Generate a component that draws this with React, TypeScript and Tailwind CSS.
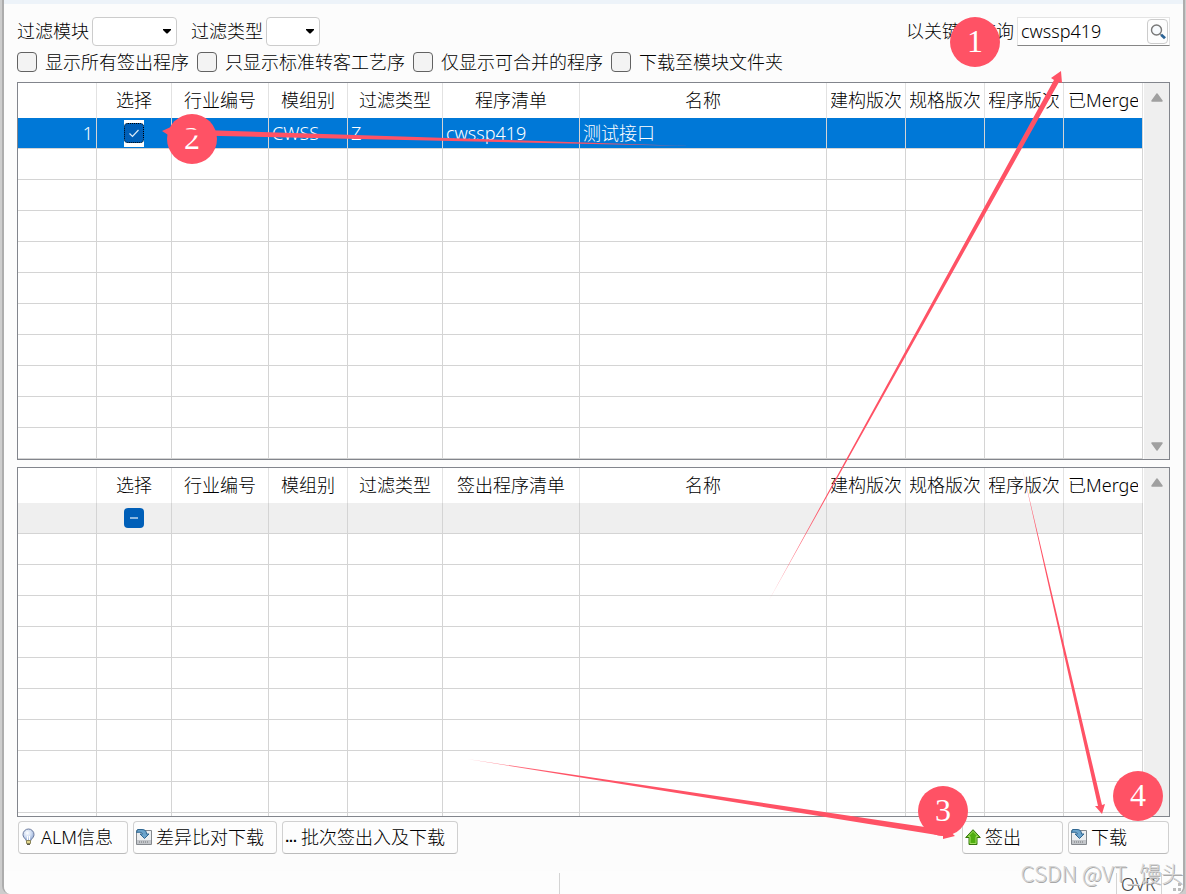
import { ReactNode } from "react";

const columns = [
  { key: "no", title: "", col: "w-[79px]" },
  { key: "select", title: "选择", col: "w-[75px]" },
  { key: "industry", title: "行业编号", col: "w-[97px]" },
  { key: "module", title: "模组别", col: "w-[79px]" },
  { key: "type", title: "过滤类型", col: "w-[95px]" },
  { key: "program", title: "程序清单", col: "w-[137px]" },
  { key: "name", title: "名称", col: "w-auto" },
  { key: "build", title: "建构版次", col: "w-[79px]" },
  { key: "spec", title: "规格版次", col: "w-[79px]" },
  { key: "version", title: "程序版次", col: "w-[79px]" },
  { key: "merged", title: "已Merge", col: "w-[79px]" },
];

const filters = [
  "显示所有签出程序",
  "只显示标准转客工艺序",
  "仅显示可合并的程序",
  "下载至模块文件夹",
];

const program: any = {
  no: "1",
  module: "CWSS",
  type: "Z",
  program: "cwssp419",
  name: "测试接口",
};

const BulbIcon = () => (
  <svg width="16" height="18" viewBox="0 0 16 18" className="shrink-0">
    <defs>
      <radialGradient id="bulb" cx="0.4" cy="0.35" r="0.7">
        <stop offset="0" stopColor="#ffffff" />
        <stop offset="0.5" stopColor="#cfdcf2" />
        <stop offset="1" stopColor="#8ea6d2" />
      </radialGradient>
    </defs>
    <path
      d="M7.500 1A5.500 5.500 0 0 0 2 6.500c0 2.300 1.400 3.400 2.400 4.600.5.6.6 1 .6 1.400h5c0-.4.1-.8.6-1.400 1-1.200 2.400-2.300 2.400-4.600A5.500 5.500 0 0 0 7.500 1z"
      fill="url(#bulb)"
      stroke="#6b7a9e"
    />
    <path d="M6.500 8v4M8.500 8v4" stroke="#ffffff" />
    <path d="M5.500 12.500h4v3h-4z" fill="#e2d68c" stroke="#8a8458" />
    <path d="M6 16.500h3" stroke="#5c5a4c" />
  </svg>
);

const DownloadIcon = () => (
  <svg width="16" height="16" viewBox="0 0 16 16" className="shrink-0">
    <path d="M0.500 1.500h15v14h-15z" fill="#eceef0" stroke="#84888d" />
    <path d="M1 11h14v4H1z" fill="#c3c6ca" />
    <path d="M3.500 12v2M5.500 12v2M7.500 12v2M9.500 12v2M11.500 12v2" stroke="#9a9da1" />
    <path
      d="M1.500 0.500h4.500c3 0 4.500 1.500 4.500 4.500H13L8.500 9.500 4 5h2.500C6.300 3.600 4.500 2.800 0.500 3.500z"
      fill="#6ba3cb"
      stroke="#2f6691"
    />
  </svg>
);

const UpIcon = () => (
  <svg width="16" height="16" viewBox="0 0 16 16" className="shrink-0">
    <path
      d="M8 0.700 15.300 8.500h-3.300v7H4v-7H0.700z"
      fill="#4fae10"
      stroke="#34740c"
      strokeLinejoin="round"
    />
    <path d="M8 2.300 13 7.500h-2v7H5v-7H3z" fill="none" stroke="#a3df62" />
  </svg>
);

const SearchIcon = () => (
  <svg width="16" height="16" viewBox="0 0 16 16">
    <circle cx="6.500" cy="6" r="5" fill="#f7fafd" stroke="#777777" strokeWidth="1.400" />
    <path d="m10 9.500 1.500 1.500" stroke="#8b8b8b" strokeWidth="1.500" />
    <path d="m11.200 10.700 3.800 3.600" stroke="#2c6496" strokeWidth="2.800" />
  </svg>
);

const ScrollArrow = ({ down }: { down?: boolean }) => (
  <svg width="12" height="9" viewBox="0 0 12 9" className={down ? "rotate-180" : ""}>
    <path d="M6 1 11 8H1z" fill="#a0a0a0" stroke="#a0a0a0" strokeWidth="1.500" strokeLinejoin="round" />
  </svg>
);

const Combo = ({ id, className }: { id: string; className: string }) => (
  <div className={`relative ${className}`}>
    <select
      id={id}
      className="block h-[29px] w-full appearance-none rounded-[4px] border border-[#cccccc] bg-white"
    >
      <option value=""></option>
    </select>
    <svg
      width="8"
      height="5"
      viewBox="0 0 8 5"
      className="pointer-events-none absolute right-[6px] top-3"
    >
      <path d="M0 0h8v1L4.500 4.500h-1L0 1z" fill="#000" />
    </svg>
  </div>
);

const ToolButton = ({ icon, className, children }: { icon: ReactNode; className: string; children: ReactNode }) => (
  <button
    type="button"
    className={`flex h-[33px] items-center gap-1 whitespace-nowrap rounded-[4px] border border-[#d0d0d0] border-b-[#bbbbbb] bg-[#fdfdfd] px-[2px] pb-[2px] ${className}`}
  >
    {icon}
    <span>{children}</span>
  </button>
);

const RowCheck = ({ mixed }: { mixed?: boolean }) => (
  <div
    className={
      mixed
        ? "relative mx-auto h-5 w-5"
        : "relative mx-auto flex h-[27px] w-5 items-center bg-white"
    }
  >
    <input
      type="checkbox"
      aria-label="选择"
      defaultChecked={!mixed}
      className={
        mixed
          ? "block h-5 w-5 appearance-none rounded-[4px] bg-[#005fb8]"
          : "block h-5 w-5 appearance-none rounded-[4px] border border-dotted border-black bg-[#005fb8]"
      }
    />
    <svg
      viewBox="0 0 20 20"
      className={
        mixed
          ? "pointer-events-none absolute left-0 top-0 h-5 w-5"
          : "pointer-events-none absolute left-0 top-[3px] h-5 w-5"
      }
    >
      {mixed ? (
        <path d="M6 10h8" stroke="#8cb8e0" strokeWidth="2" />
      ) : (
        <path d="m5.500 10.500 3 3 6-6.500" fill="none" stroke="#dcebf8" strokeWidth="1.200" />
      )}
    </svg>
  </div>
);

const Grid = ({ rows, programTitle, selected, className, children }: any) => (
  <div className={`flex overflow-hidden border border-[#82858c] bg-white ${className}`}>
    <table className="h-max w-full min-w-0 flex-1 table-fixed border-separate border-spacing-0">
      <colgroup>
        {columns.map((item) => (
          <col key={item.key} className={item.col} />
        ))}
      </colgroup>
      <thead>
        <tr className="h-[35px]">
          {columns.map((item) => (
            <th key={item.key} scope="col" className="border-r border-[#e2e2e2] px-1 pb-[2px] pt-0 font-light">
              <div
                className={
                  item.key === "merged"
                    ? "flex overflow-hidden whitespace-nowrap"
                    : "flex justify-center overflow-hidden whitespace-nowrap"
                }
              >
                {item.key === "program" ? programTitle : item.title}
              </div>
            </th>
          ))}
        </tr>
      </thead>
      <tbody>
        {Array.from({ length: rows }).map((_, index) => (
          <tr
            key={index}
            className={
              index > 0 ? "h-[31px]" : selected ? "h-[31px] bg-[#0078d7] text-white" : "h-[31px] bg-[#efefef]"
            }
          >
            {columns.map((item) => (
              <td
                key={item.key}
                className={
                  item.key === "no"
                    ? "whitespace-nowrap border-b border-r border-[#d4d4d4] px-[3px] py-0 text-right"
                    : "whitespace-nowrap border-b border-r border-[#d4d4d4] px-[3px] py-0"
                }
              >
                {index === 0 && item.key === "select" && <RowCheck mixed={!selected} />}
                {index === 0 && selected && selected[item.key]}
              </td>
            ))}
          </tr>
        ))}
      </tbody>
    </table>
    <div className="ml-px flex w-[25px] shrink-0 flex-col items-center justify-between bg-[#efefef] pb-2 pt-[10px]">
      <ScrollArrow />
      {children}
    </div>
  </div>
);

const marks = [
  { n: 1, x: 975, y: 42 },
  { n: 2, x: 192, y: 139 },
  { n: 3, x: 943, y: 811 },
  { n: 4, x: 1138, y: 796 },
];

// each arrow fades in from its thin tail
const arrows = [
  { id: "a1", from: [768, 602], to: [1061, 71], d: "M768 602 1054 80 1051 78 1061 71 1062 83 1059 82z" },
  { id: "a2", from: [690, 146], to: [162, 131], d: "M690 146 173 135 173 138 162 131 173 126 173 129z" },
  { id: "a3", from: [467, 759], to: [954, 836], d: "M467 759 945 830 945 827 955 836 943 839 943 836z" },
  { id: "a4", from: [1022, 467], to: [1102, 814], d: "M1022 467 1102 805 1105 804 1102 814 1095 806 1098 806z" },
];

const Annotations = () => (
  <svg
    width="1186"
    height="894"
    viewBox="0 0 1186 894"
    className="pointer-events-none absolute left-0 top-0"
  >
    <defs>
      {arrows.map((item) => (
        <linearGradient
          key={item.id}
          id={item.id}
          gradientUnits="userSpaceOnUse"
          x1={item.from[0]}
          y1={item.from[1]}
          x2={item.to[0]}
          y2={item.to[1]}
        >
          <stop offset="0" stopColor="#ff5265" stopOpacity="0.700" />
          <stop offset="0.200" stopColor="#ff5265" />
        </linearGradient>
      ))}
    </defs>
    {marks.map((item) => (
      <g key={item.n}>
        <circle cx={item.x} cy={item.y} r="25" fill="#ff5265" />
        <text
          x={item.x}
          y={item.y + 10}
          textAnchor="middle"
          fill="#fff"
          className="font-['Liberation_Serif',serif] text-[32px] font-normal"
        >
          {item.n}
        </text>
      </g>
    ))}
    {arrows.map((item) => (
      <path key={item.id} d={item.d} fill={`url(#${item.id})`} />
    ))}
  </svg>
);

const App = () => {
  return (
    <div className="relative min-h-screen overflow-hidden bg-[#cdcdcd] pl-[2px] pr-px font-['Noto_Sans','Noto_Sans_CJK_SC',sans-serif] text-[18px] font-light leading-6 text-black">
      <main className="flex min-h-screen flex-col rounded-b-lg border-x-2 border-[#adadad] bg-[#fcfcfc]">
        <div className="h-1 bg-[#edf3f9]" />
        <div className="px-[13px] pt-[13px]">
          <div className="flex items-center gap-[3px] whitespace-nowrap">
            <label htmlFor="module" className="pb-[2px]">
              过滤模块
            </label>
            <Combo id="module" className="mr-[11px] w-[85px]" />
            <label htmlFor="type" className="pb-[2px]">
              过滤类型
            </label>
            <Combo id="type" className="w-[54px]" />
            <label htmlFor="keyword" className="ml-auto pb-[2px]">
              以关键字查询
            </label>
            <div className="flex h-[29px] w-[153px] items-center border border-[#e4e4e4] border-b-[#868686] bg-white pr-px">
              <input
                id="keyword"
                type="text"
                defaultValue="cwssp419"
                className="h-6 min-w-0 flex-1 bg-transparent pb-[2px] pl-[3px] outline-none"
              />
              <button
                type="button"
                aria-label="查询"
                className="flex h-[25px] w-[21px] items-center justify-center rounded-[4px] border border-[#cccccc] bg-[#fdfdfd]"
              >
                <SearchIcon />
              </button>
            </div>
          </div>

          <div className="mt-1 flex gap-2 whitespace-nowrap">
            {filters.map((item) => (
              <label key={item} className="flex items-center gap-2">
                <input
                  type="checkbox"
                  className="h-5 w-5 appearance-none rounded-[4px] border border-[#626262] bg-[#f3f3f3]"
                />
                {item}
              </label>
            ))}
          </div>

          <Grid rows={11} programTitle="程序清单" selected={program} className="mt-2">
            <ScrollArrow down />
          </Grid>
          <Grid rows={11} programTitle="签出程序清单" className="mt-[7px] h-[350px]" />

          <div className="mt-1 flex gap-[5px] px-px">
            <ToolButton icon={<BulbIcon />} className="w-[110px]">
              ALM信息
            </ToolButton>
            <ToolButton icon={<DownloadIcon />} className="w-[144px]">
              差异比对下载
            </ToolButton>
            <ToolButton
              icon={<span className="w-3 font-['Liberation_Sans',sans-serif] text-[14px] font-bold">...</span>}
              className="w-[176px]"
            >
              批次签出入及下载
            </ToolButton>
            <ToolButton icon={<UpIcon />} className="ml-auto w-[101px]">
              签出
            </ToolButton>
            <ToolButton icon={<DownloadIcon />} className="w-[101px]">
              下载
            </ToolButton>
          </div>
        </div>

        <footer className="mt-[17px] flex h-[23px] justify-between overflow-hidden rounded-b-lg bg-[#fdfdfd] pt-[2px]">
          <div className="w-[47.2%] border-r border-[#d4d4d4]" />
          <div className="flex">
            <div className="w-[46px] border-x border-[#d4d4d4] pl-1 leading-[22px] text-[#444444]">OVR</div>
            <svg width="21" height="21" viewBox="0 0 21 21">
              <path d="M16 10h3v3h-3zM11 15h3v3h-3zM16 15h3v3h-3z" fill="#bcbcbc" />
            </svg>
          </div>
        </footer>
      </main>

      <p className="pointer-events-none absolute bottom-[6px] right-[3px] whitespace-nowrap font-['Noto_Sans_CJK_SC',sans-serif] text-[22px] leading-8 text-[#d4d4d4] [text-shadow:1px_1px_0_#a8a8a8]">
        CSDN @VT_馒头
      </p>
      <Annotations />
    </div>
  );
};

export default App;
